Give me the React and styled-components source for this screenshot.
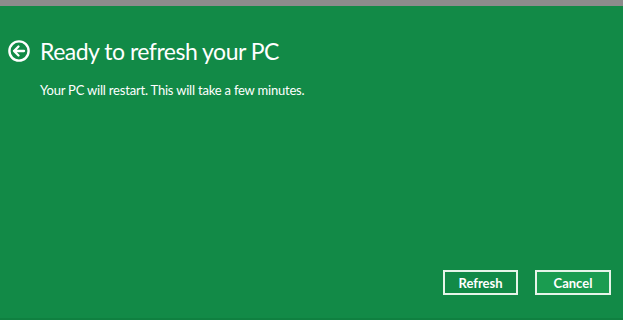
import React from "react";
import styled, { createGlobalStyle } from "styled-components";

const GlobalStyle = createGlobalStyle`
  html, body {
    margin: 0;
    padding: 0;
    background: #128a47;
  }
  * { box-sizing: border-box; }
`;

const Screen = styled.div({
  width: "623px",
  height: "320px",
  display: "flex",
  flexDirection: "column",
  backgroundColor: "#128a47",
  fontFamily: 'Lato, "Open Sans", sans-serif',
  color: "#ffffff",
  overflow: "hidden",
});

const TopBar = styled.div({
  height: "6px",
  backgroundColor: "#8c8c8c",
  flexShrink: 0,
});

const Body = styled.div({
  flex: 1,
  display: "flex",
  flexDirection: "column",
  padding: "34px 12px 0 8px",
});

const HeaderRow = styled.div({
  display: "flex",
  alignItems: "center",
  gap: "10px",
  height: "22px",
});

const BackButton = styled.svg({
  width: "22px",
  height: "22px",
  flexShrink: 0,
});

const Title = styled.h1({
  margin: 0,
  fontSize: "23px",
  fontWeight: 400,
  lineHeight: "22px",
  letterSpacing: "-0.5px",
});

const Subtitle = styled.p({
  margin: "20px 0 0 32px",
  fontSize: "13px",
  lineHeight: "16px",
  letterSpacing: "-0.2px",
});

const Spacer = styled.div({
  flex: 1,
});

const Actions = styled.div({
  display: "flex",
  justifyContent: "flex-end",
  gap: "17px",
  paddingBottom: "23px",
});

const BottomEdge = styled.div({
  height: "2px",
  backgroundColor: "#0f8040",
  flexShrink: 0,
});

const ActionButton = styled.button`
  width: ${(p) => (p.wide ? "76px" : "75px")};
  height: 25px;
  border: 2px solid #e6f5e9;
  background-color: ${(p) => (p.primary ? "#1a9c50" : "#128a47")};
  color: #ffffff;
  font-family: Lato, "Open Sans", sans-serif;
  font-size: 13px;
  font-weight: 700;
  padding: 0;
  cursor: pointer;
`;

const App = () => (
  <>
    <GlobalStyle />
    <Screen>
      <TopBar />
      <Body>
        <HeaderRow>
          <BackButton viewBox="0 0 22 22">
            <circle cx="11" cy="11" r="9.6" fill="none" stroke="#fff" strokeWidth="2.4" />
            <path
              d="M6 11 H16 M6 11 L10.5 6.5 M6 11 L10.5 15.5"
              fill="none"
              stroke="#fff"
              strokeWidth="2.3"
              strokeLinecap="round"
              strokeLinejoin="round"
            />
          </BackButton>
          <Title>Ready to refresh your PC</Title>
        </HeaderRow>
        <Subtitle>Your PC will restart. This will take a few minutes.</Subtitle>
        <Spacer />
        <Actions>
          <ActionButton>Refresh</ActionButton>
          <ActionButton primary wide>
            Cancel
          </ActionButton>
        </Actions>
      </Body>
      <BottomEdge />
    </Screen>
  </>
);

export default App;
